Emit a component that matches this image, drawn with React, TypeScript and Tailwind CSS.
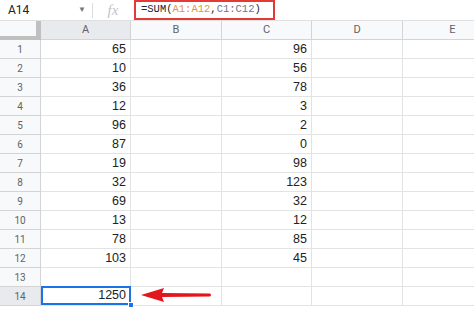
const colA = [65, 10, 36, 12, 96, 87, 19, 32, 69, 13, 78, 103];
const colC = [96, 56, 78, 3, 2, 0, 98, 123, 32, 12, 85, 45];

const cell = "h-[19px] border-r border-b border-[#e2e3e3] bg-white";
const num =
  "flex items-center justify-end pr-[4px] text-[12.5px] text-[#222] font-['Liberation_Sans',Arial,sans-serif]";
const rowHead =
  "h-[19px] border-r border-b border-[#d4d4d4] flex items-center justify-center text-[10px] text-[#5f6368]";

export default function App() {
  const rows = Array.from({ length: 14 }, (_, i) => i + 1);

  return (
    <div className="relative w-[474px] h-[309px] overflow-hidden bg-white font-['Roboto','Liberation_Sans',sans-serif]">
      {/* formula bar */}
      <div className="flex items-center h-[21px] border-b border-[#e0e0e0]">
        <div className="w-[92px] flex items-center pl-[8px] pr-[6px]">
          <span className="text-[12px] text-[#222]">A14</span>
          <span className="ml-auto text-[8px] text-[#777]">▼</span>
        </div>
        <div className="w-px h-[15px] bg-[#dadce0]" />
        <div className="w-[40px] flex justify-center">
          <span className="italic text-[15px] text-[#c4c4c4] font-['Liberation_Serif',serif]">fx</span>
        </div>
        <div className="ml-[1px] w-[141px] h-[20px] border-2 border-[#e53935] flex items-center pl-[5px] font-['Liberation_Mono',monospace] text-[10.5px] text-[#222]">
          <span>=SUM(</span>
          <span className="text-[#e69138]">A1:A12</span>
          <span>,</span>
          <span className="text-[#7a6e8a]">C1:C12</span>
          <span>)</span>
        </div>
      </div>

      {/* grid */}
      <div className="grid grid-cols-[41px_90px_91px_90px_91px_100px]">
        <div className="h-[19px] bg-[#f8f9fa] border-r-[5px] border-b-[4px] border-[#c0c0c0]" />
        {["A", "B", "C", "D", "E"].map((c) => (
          <div
            key={c}
            className={`h-[19px] border-r border-b border-[#d4d4d4] flex items-center justify-center text-[11px] text-[#5f6368] ${
              c === "A" ? "bg-[#e8eaed]" : "bg-[#f8f9fa]"
            }`}
          >
            {c}
          </div>
        ))}

        {rows.map((r) => (
          <div key={r} className="contents">
            <div className={`${rowHead} ${r === 14 ? "bg-[#e8eaed]" : "bg-[#f8f9fa]"}`}>{r}</div>
            {r === 14 ? (
              <div className="relative h-[19px] border-b border-[#e2e3e3]">
                <div className="absolute inset-0 -top-px border-2 border-[#1a73e8] flex items-center justify-end pr-[3px] text-[12.5px] text-[#222] font-['Liberation_Sans',Arial,sans-serif]">
                  1250
                </div>
                <div className="absolute -right-[3px] -bottom-[3px] w-[6px] h-[6px] bg-[#1a73e8] border border-white" />
              </div>
            ) : (
              <div className={`${cell} ${num}`}>{colA[r - 1] ?? ""}</div>
            )}
            <div className={cell} />
            <div className={`${cell} ${num}`}>{colC[r - 1] ?? ""}</div>
            <div className={cell} />
            <div className={cell} />
          </div>
        ))}
      </div>

      {/* arrow */}
      <svg className="absolute left-[138px] top-[286px]" width="76" height="18" viewBox="0 0 76 18">
        <path d="M3 9 L26 2 L24 7 L72 7.5 Q74 9 72 10.5 L24 11 L26 16 Z" fill="#e3161b" />
      </svg>
    </div>
  );
}
